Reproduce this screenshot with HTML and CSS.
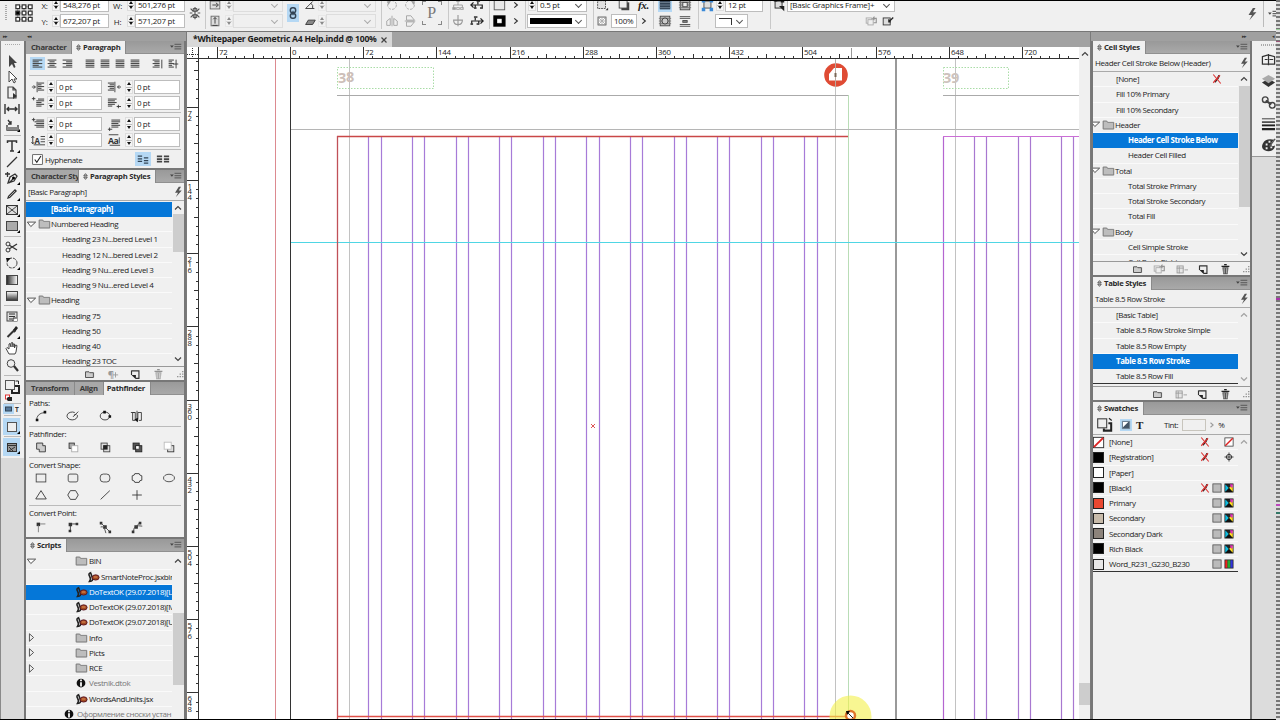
FILE: index.html
```html
<!DOCTYPE html>
<html lang="en">
<head>
<meta charset="utf-8">
<title>Whitepaper Geometric A4 Help.indd</title>
<link rel="stylesheet" href="styles.css">
</head>
<body>
<div class="app">
<header class="control">
  <div class="grp ga">
    <i class="tall grip-v"></i><i class="tall" data-i="refpoint" data-s="20"></i>
    <label>X:</label><b class="spin"></b><span class="field">548,276 pt</span><label>W:</label><b class="spin"></b><span class="field">501,276 pt</span><i class="tall" data-i="unlink"></i>
    <label>Y:</label><b class="spin"></b><span class="field">672,207 pt</span><label>H:</label><b class="spin"></b><span class="field">571,207 pt</span>
  </div>
  <div class="grp gb">
    <i data-i="scalex"></i><b class="spin dim"></b><span class="field off combo"></span><i class="tall chain" data-i="chain" data-s="12"></i><i data-i="angle"></i><b class="spin dim"></b><span class="field off combo"></span>
    <i data-i="scaley"></i><b class="spin dim"></b><span class="field off combo"></span><i data-i="shear"></i><b class="spin dim"></b><span class="field off combo"></span>
  </div>
  <div class="grp gc"><i data-i="rotl"></i><i data-i="rotr"></i><span class="tall bigp">P</span><i data-i="fliph"></i><i data-i="flipv"></i></div>
  <div class="grp gd"><i data-i="tree" class="dim"></i><i data-i="tree2"></i><i data-i="treed" class="dim"></i><i data-i="tree3"></i></div>
  <div class="grp ge"><i data-i="fillbox"></i><i data-i="chev"></i><i data-i="strokebox"></i><i data-i="chev"></i></div>
  <div class="grp gf"><b class="spin"></b><span class="field combo">0.5 pt</span><span class="field combo wide"><em></em></span></div>
  <div class="grp gg"><i data-i="dashbox"></i><i data-i="shadow"></i><i class="fx">fx.</i><i data-i="opac"></i><span class="field">100%</span><i data-i="chev"></i></div>
  <div class="grp gh"><i data-i="wrap1" class="lit"></i><i data-i="wrap2"></i><i data-i="wrap3"></i><i data-i="wrap4"></i></div>
  <div class="grp gi"><i data-i="corner"></i><b class="spin"></b><span class="field">12 pt</span><i></i><span class="field combo cornerbox"><u></u></span></div>
  <div class="grp gj"><i data-i="objstyle"></i><span class="field combo">[Basic Graphics Frame]+</span><i></i><div class="pair"><i data-i="clear" class="dim"></i><i data-i="newov"></i></div></div>
  <div class="endbar"><i data-i="bolt" data-s="14"></i><s></s><i data-i="menu" data-s="12"></i></div>
</header>

<main class="work">
  <div class="left">
    <div class="dockbar"><span>▸▸</span><span>◂◂</span></div>
    <div class="leftcols">
      <nav class="tools" id="tools"></nav>
      <div class="panels">
        <section class="p-para">
          <div class="tabs"><span class="tab off first">Character</span><span class="tab on"><i data-i="updown" data-s="7"></i>Paragraph</span><i data-i="menu" data-s="12"></i></div>
          <div class="aligns"><i class="lit" data-i="al"></i><i data-i="ac"></i><i data-i="ar"></i><i data-i="aj" class="gap"></i><i data-i="aj"></i><i data-i="aj"></i><i data-i="aj"></i><i data-i="as" class="gap"></i><i data-i="as2"></i></div>
          <div class="pgrid"><i data-i="ind1"></i><b class="spin"></b><span class="field">0 pt</span><i data-i="ind2"></i><b class="spin"></b><span class="field">0 pt</span><i data-i="ind3"></i><b class="spin"></b><span class="field">0 pt</span><i data-i="ind4"></i><b class="spin"></b><span class="field">0 pt</span></div>
          <div class="pgrid second"><i data-i="ind5"></i><b class="spin"></b><span class="field">0 pt</span><i data-i="ind6"></i><b class="spin"></b><span class="field">0 pt</span><i data-i="drop1"></i><b class="spin"></b><span class="field">0</span><i data-i="drop2"></i><b class="spin"></b><span class="field">0</span></div>
          <div class="hyph"><i data-i="check" data-s="11"></i><span>Hyphenate</span><i class="lit" data-i="grid1"></i><i data-i="grid2"></i></div>
        </section>
        <section class="p-styles">
          <div class="tabs"><span class="tab off cut">Character Sty</span><span class="tab on"><i data-i="updown" data-s="7"></i>Paragraph Styles</span><i data-i="menu" data-s="12"></i></div>
          <div class="current"><span>[Basic Paragraph]</span><i data-i="bolt" data-s="12"></i></div>
          <div class="scroller"><div class="list" id="pstyles"></div><div class="bar"><i data-i="up" data-s="8"></i><em></em><i data-i="down" data-s="8"></i></div></div>
          <div class="foot"><i data-i="folder2"></i><i data-i="pclear" class="dim"></i><i data-i="new"></i><i data-i="trash" class="dim"></i><i data-i="grab" data-s="10"></i></div>
        </section>
        <section class="p-path">
          <div class="tabs"><span class="tab off">Transform</span><span class="tab off">Align</span><span class="tab on">Pathfinder</span></div>
          <h4>Paths:</h4><div class="icons"><i data-i="pp1"></i><i data-i="pp2"></i><i data-i="pp3"></i><i data-i="pp4"></i></div>
          <h4 class="ln">Pathfinder:</h4><div class="icons"><i data-i="pf1"></i><i data-i="pf2"></i><i data-i="pf3"></i><i data-i="pf4"></i><i data-i="pf5"></i></div>
          <h4 class="ln">Convert Shape:</h4><div class="icons shapes"><i data-i="cs1"></i><i data-i="cs2"></i><i data-i="cs3"></i><i data-i="cs4"></i><i data-i="cs5"></i><i data-i="cs6"></i><i data-i="cs7"></i><i data-i="cs8"></i><i data-i="cs9"></i></div>
          <h4 class="ln">Convert Point:</h4><div class="icons"><i data-i="cp1"></i><i data-i="cp2"></i><i data-i="cp3"></i><i data-i="cp4"></i></div>
        </section>
        <section class="p-scripts">
          <div class="tabs"><span class="tab on"><i data-i="updown" data-s="7"></i>Scripts</span><i data-i="menu" data-s="12"></i></div>
          <div class="scroller"><div class="list" id="scripts"></div><div class="bar"><i data-i="up" data-s="8"></i><em></em></div></div>
        </section>
      </div>
    </div>
  </div>

  <div class="doc">
    <div class="doctabs"><div class="doctab"><span>*Whitepaper Geometric A4 Help.indd @ 100%</span><i data-i="close" data-s="8"></i></div></div>
    <div class="docbody">
      <div class="pageview">
        <svg id="hruler" width="892" height="12" viewBox="187 47 892 12"></svg>
        <div class="lower">
          <svg id="vruler" width="12" height="660" viewBox="187 59 12 660"></svg>
          <svg id="canvas" width="880" height="660" viewBox="199 59 880 660"></svg>
        </div>
      </div>
      <div class="bar docscroll"><i data-i="up" data-s="8"></i><em></em></div>
    </div>
  </div>

  <div class="right">
    <div class="dockbar"><span>▸▸</span><span>◂</span></div>
    <div class="rightcols">
      <div class="panels">
        <section class="p-cell">
          <div class="tabs"><span class="tab on"><i data-i="updown" data-s="7"></i>Cell Styles</span><i data-i="menu" data-s="12"></i></div>
          <div class="current"><span>Header Cell Stroke Below (Header)</span><i data-i="bolt" data-s="12"></i></div>
          <div class="scroller"><div class="list" id="cells"></div><div class="bar"><i data-i="up" data-s="8"></i><em></em><i data-i="down" data-s="8"></i></div></div>
          <div class="foot"><i data-i="folder2"></i><i data-i="clear" class="dim"></i><i data-i="tclear" class="dim"></i><i data-i="new"></i><i data-i="trash"></i><i data-i="grab" data-s="10"></i></div>
        </section>
        <section class="p-table">
          <div class="tabs"><span class="tab on"><i data-i="updown" data-s="7"></i>Table Styles</span><i data-i="menu" data-s="12"></i></div>
          <div class="current"><span>Table 8.5 Row Stroke</span><i data-i="bolt" data-s="12"></i></div>
          <div class="scroller"><div class="list" id="tables"></div><div class="bar"><i data-i="up" data-s="8" class="dim"></i><em></em><i data-i="down" data-s="8" class="dim"></i></div></div>
          <div class="foot"><i data-i="folder2"></i><i data-i="tclear" class="dim"></i><i data-i="new"></i><i data-i="trash"></i><i data-i="grab" data-s="10"></i></div>
        </section>
        <section class="p-swatch">
          <div class="tabs"><span class="tab on"><i data-i="updown" data-s="7"></i>Swatches</span><i data-i="menu" data-s="12"></i></div>
          <div class="swbar"><i data-i="fs" data-s="18"></i><i class="lit" data-i="cont" data-s="12"></i><b class="tt">T</b><span>Tint:</span><em></em><i data-i="chev" data-s="12" class="dim"></i><span>%</span></div>
          <div class="scroller"><div class="list" id="swatches"></div><div class="bar"><i data-i="up" data-s="8" class="dim"></i></div></div>
        </section>
      </div>
      <nav class="strip"><i class="grip-h"></i><i data-i="pages" data-s="15"></i><i data-i="layers" data-s="15"></i><i data-i="links" data-s="15"></i><i data-i="strokes" data-s="15"></i><i data-i="palette" data-s="15"></i></nav>
    </div>
  </div>
</main>
<div class="edge"></div>
</div>
<script src="app.js"></script>
</body>
</html>
```

FILE: styles.css
```css
* { box-sizing: border-box; }
body { margin: 0; background: #000; }
.app {
  position: relative; width: 1280px; height: 720px; padding: 1px 0; overflow: hidden;
  display: flex; flex-direction: column;
  font: 8px/15px "Open Sans", "Noto Sans", sans-serif; letter-spacing: -.39px; color: #1c1c1c; background: #000;
}
i, em { font-style: normal; display: block; }
i svg { display: block; }
.dim { opacity: .45; }
.lit { background: #b5d8f4; }

/* control bar */
.control { height: 30px; background: #f0f0f0; display: flex; overflow: hidden; flex: none; letter-spacing: -.25px; }
.grp { display: grid; grid-template-rows: 16px 16px; margin-top: -4px; height: 34px; flex: none; align-items: center; justify-items: center; border-left: 1px solid transparent; background: linear-gradient(#c9c9c9, #c9c9c9) 0 4px / 1px 28px no-repeat; }
.tall { grid-row: span 2; }
.ga { width: 204px; grid-template-columns: 9px 28px 13px 9px 49px 17px 9px 50px 19px; background: none; }
.gb { width: 176px; grid-template-columns: 19px 9px 50px 19px 15px 9px 50px; }
.gc { width: 67px; padding-left: 2px; grid-template-columns: 18px 18px 25px; }
.gc > i { opacity: .5; }
.gd { width: 41px; grid-template-columns: 19px 20px; }
.ge { width: 36px; grid-template-columns: 20px 14px; }
.gf { width: 68px; padding-left: 2px; grid-template-columns: 10px 50px; }
.gg { width: 60px; grid-template-columns: 18px 26px 13px; }
.gh { width: 45px; padding-left: 2px; grid-template-columns: 20px 19px; }
.gi { width: 72px; grid-template-columns: 17px 10px 38px; }
.gj { width: 129px; grid-template-columns: 17px 108px; }
.pair { display: flex; gap: 3px; justify-self: end; }
.grip-v { width: 2px; height: 16px; background: repeating-linear-gradient(#aaa 0 1px, transparent 1px 2px); }
.spin { width: 8px; height: 12px; border: 1px solid #ddd; background: linear-gradient(#bbb, #bbb) center / 6px 1px no-repeat, #f5f5f5; display: flex; flex-direction: column; align-items: center; justify-content: space-between; padding: 1px 0; }
.spin::before, .spin::after { content: ""; border: 2px solid transparent; }
.spin::before { border-bottom: 3px solid #111; border-top: 0; }
.spin::after { border-top: 3px solid #111; border-bottom: 0; }
.field { width: 100%; height: 14px; border: 1px solid #bdbdbd; background: #fff; padding-left: 2px; line-height: 12px; white-space: nowrap; position: relative; }
.field.off { background: #f0f0f0; border-color: #ddd; }
.combo::after { content: ""; position: absolute; right: 5px; top: 3px; width: 4px; height: 4px; border: solid #555; border-width: 0 1px 1px 0; transform: rotate(45deg); }
.combo.off::after { border-color: #aaa; }
.wide { grid-column: span 2; padding: 3px 2px; }
.wide em { width: 42px; height: 6px; background: #000; }
.cornerbox { grid-column: 2 / 4; justify-self: start; width: 33px; padding: 3px 3px; }
.cornerbox u { display: block; width: 13px; height: 7px; border: solid #333; border-width: 1px 1px 0 0; }
.bigp { font: 16px/24px "Liberation Serif", serif; color: #777; width: 20px; height: 24px; text-align: center; background: linear-gradient(#888,#888) 0 0/4px 1px no-repeat, linear-gradient(#888,#888) 0 0/1px 4px no-repeat, linear-gradient(#888,#888) 100% 0/4px 1px no-repeat, linear-gradient(#888,#888) 100% 0/1px 4px no-repeat, linear-gradient(#888,#888) 0 100%/4px 1px no-repeat, linear-gradient(#888,#888) 0 100%/1px 4px no-repeat, linear-gradient(#888,#888) 100% 100%/4px 1px no-repeat, linear-gradient(#888,#888) 100% 100%/1px 4px no-repeat; }
.fx { font: italic bold 11px/14px "Liberation Serif", serif; }
.chain { background: #b5d8f4; padding: 3px 0; height: 18px; }
.endbar { margin-left: auto; width: 35px; display: flex; align-items: center; gap: 4px; padding-bottom: 4px; overflow: hidden; }
.endbar i { flex: none; }
.endbar s { width: 1px; height: 26px; background: #bbb; flex: none; }

/* work area */
.work { display: flex; flex: 1; min-height: 0; background: #7b7b7b; }
.left { width: 186px; flex: none; display: flex; flex-direction: column; }
.right { width: 189px; flex: none; display: flex; flex-direction: column; }
.dockbar { height: 10px; flex: none; border-top: 1px solid #777; background: #a0a0a0; font: 5px/9px "DejaVu Sans", sans-serif; color: #333; display: flex; letter-spacing: -.5px; }
.left .dockbar { padding-left: 3px; gap: 20px; }
.right .dockbar { padding-left: 151px; gap: 26px; }
.leftcols, .rightcols { display: flex; flex: 1; min-height: 0; }
.tools { width: 24px; background: #dadada; border-left: 1px solid #8a8a8a; flex: none; }
.toolbox { background: #f0f0f0; height: 417px; }
.toolbox svg { display: block; }
.panels { width: 162px; padding: 0 2px; background: #777; flex: none; display: flex; flex-direction: column; }
.right .panels { width: 161px; }
section { background: #f0f0f0; flex: none; overflow: hidden; display: flex; flex-direction: column; }
.p-para { height: 127px; margin-bottom: 2px; }
.p-styles { height: 210px; margin-bottom: 2px; }
.p-path { height: 155px; margin-bottom: 2px; }
.p-scripts { flex: 1; }
.tabs { height: 13px; flex: none; display: flex; background: linear-gradient(#999, #a9a9a9); font-weight: 700; font-size: 7.7px; line-height: 13px; letter-spacing: -.28px; border-bottom: 1px solid #909090; }
.tab { padding: 0 5px; white-space: nowrap; display: flex; color: #2a2a2a; border-right: 1px solid #8a8a8a; height: 13px; }
.tab.on { background: #f0f0f0; padding: 0 5px 0 3px; }
.tab.off { color: #383838; background: #a8a8a8; }
.tab.first { width: 46px; }
.tab i { margin: 3px 1px 0 0; }
.tab.cut { width: 53px; overflow: hidden; padding-right: 0; }
.tabs > i { margin-left: auto; margin-right: 2px; }
.current { height: 18px; flex: none; display: flex; justify-content: space-between; align-items: center; padding: 0 0 0 2px; border-bottom: 1px solid #aaa; white-space: nowrap; }
.scroller { display: flex; flex: 1; min-height: 0; overflow: hidden; }
.list { flex: 1; min-width: 0; overflow: hidden; }
.row { height: 15.25px; display: flex; align-items: center; white-space: nowrap; border-bottom: 1px solid #fafafa; overflow: hidden; line-height: 14px; }
.row i { flex: none; }
.row.sel { background: #0577d8; color: #fff; border-color: #0577d8; }
.row.bold { font-weight: 700; font-size: 7.9px; letter-spacing: -.4px; }
.row.grey { color: #777; }
.row .sp { flex: 1; }
.l0 { padding-left: 23px; }
.left .l0 { padding-left: 25px; }
.l1 { padding-left: 36px; }
.right .l1 { padding-left: 35px; }
.right .lf i:first-child { margin-left: -3px; }
.s0 { padding-left: 36px; }
.s1 { padding-left: 48px; }
.s2 { padding-left: 60px; }
.s0 i, .s1 i, .s2 i, .ind + i { margin-right: 1px; }
.ind { width: 37px; flex: none; }
.tail { width: 15px; }
#swatches .row { padding: 0 3px 0 0; }
.hole { width: 12px; }
.nochip { margin: 0 3px 0 -2px; }
.bar { width: 12px; flex: none; background: #f0f0f0; display: flex; flex-direction: column; align-items: center; padding: 3px 0; }
.bar em { width: 11px; background: #cdcdcd; }
.bar i:last-child { margin-top: auto; }
.p-styles .bar em { height: 38px; margin-top: 2px; }
.p-scripts .bar em { height: 72px; margin-top: 48px; }
.p-scripts .bar { padding-top: 5px; }
.p-scripts .list { padding-top: 2.3px; }
.p-styles .list { padding-top: .8px; }
.p-cell .bar em { height: 121px; margin-top: 3px; }
.bar i:first-child { margin-top: 0; }
.foot { height: 14px; flex: none; border-top: 1px solid #999; display: flex; justify-content: flex-end; align-items: center; gap: 8px; }
.p-styles .foot { gap: 9px; }
.p-table .foot { gap: 8.5px; }
.p-para .aligns { display: flex; height: 22px; margin: 0 3px; border-bottom: 1px solid #bbb; align-items: center; padding: 0 0 2px 1px; }
.aligns i { width: 15.2px; }
.aligns .lit { height: 13px; display: flex; align-items: center; }
.aligns .gap { margin-left: 7px; }
.pgrid { display: grid; grid-template-columns: 17px 10px 46px 22px 10px 46px; grid-template-rows: 16px 16px; margin: 0 3px; padding-top: 3px; height: 37px; align-items: center; border-bottom: 1px solid #bbb; justify-items: center; }
.pgrid .field, .pgrid .spin { height: 14px; }
.pgrid i:nth-child(6n+4) { justify-self: end; margin-right: 3px; }
.hyph { display: flex; align-items: center; padding: 1px 11px 0 5px; height: 17px; }
.hyph span { flex: 1; margin-left: -1px; }
.hyph i { padding: 0 1px; margin-right: 2px; }
.hyph i:nth-child(3) { margin-right: 4px; }
.p-path h4 { margin: 0 3px; font: inherit; height: 12.5px; line-height: 16px; }
.p-path h4.ln { border-top: 1px solid #bbb; margin-top: 1px; height: 13px; line-height: 14px; }
.icons { display: grid; grid-template-columns: repeat(5, 32px); justify-items: center; height: 17px; padding-right: 2px; align-items: center; margin-left: -1px; }
.icons.shapes { height: 34.5px; }
.swbar { height: 20px; flex: none; border-bottom: 1px solid #aaa; display: flex; align-items: center; padding-left: 3px; white-space: nowrap; }
.swbar > i:nth-child(2) { margin-left: 6px; }
.tt { font: bold 11px/14px "Liberation Serif", serif; margin: 0 21px 0 4px; }
.swbar em { width: 24px; height: 12px; border: 1px solid #c8c5bd; margin: 0 0 0 4px; }
.chip { width: 11px; height: 11px; border: 1px solid #222; margin: 0 5px 0 0; flex: none; }
#tables .row:last-child, #swatches .row:last-child { border-bottom: 1.5px solid #333; }
.p-cell { height: 234px; margin-bottom: 2px; }
.p-table { height: 123px; margin-bottom: 2px; }
.p-swatch { flex: 1; }
.strip { width: 28px; background: linear-gradient(#f0f0f0 115px, #999 115px 116px, #dcdcdc 116px); display: flex; flex-direction: column; align-items: center; gap: 6.2px; padding: 3px 0 0 4px; }
.grip-h { width: 15px; height: 2px; background: repeating-linear-gradient(90deg, #aaa 0 1px, transparent 1px 2px); flex: none; }
.edge { position: absolute; right: 0; top: 0; width: 4px; height: 720px; background: linear-gradient(transparent 29px, #9c9 29px 30px, transparent 30px 41px, #957 41px 42px, transparent 42px 298px, #a3a 298px 300px, transparent 300px 504px, #b4b 504px 506px, transparent 506px 512px, #376 512px 514px, transparent 514px), repeating-linear-gradient(#777 0 2px, #ddd 2px 4px); }

/* document */
.doc { flex: 1; min-width: 0; display: flex; flex-direction: column; padding: 0 1px; }
.doctabs { height: 16px; flex: none; background: #a2a2a2; border-top: 1px solid #777; }
.doctab { width: 205px; height: 15px; background: #d8d8d8; display: flex; align-items: center; justify-content: space-between; padding: 0 4px 0 6px; font-weight: 700; font-size: 8.6px; letter-spacing: -.24px; white-space: nowrap; }
.docbody { display: flex; flex: 1; min-height: 0; }
.pageview { width: 892px; background: #fff; }
.pageview svg { display: block; }
.lower { display: flex; }
.docscroll { flex: 1; width: auto; }
.docscroll em { margin-top: 625px; height: 22px; }
svg text { font-family: "Open Sans", "Noto Sans", sans-serif; }
```

FILE: app.js
```js
const para = (a) => a.map((r, i) => `<path d="M${r[0]} ${3.5 + i * 2}H${r[1]}" stroke="#444" stroke-width="1.2"/>`).join('');
const box = (x, y, w, h, f, s) => `<rect x="${x}" y="${y}" width="${w}" height="${h}" fill="${f || 'none'}" stroke="${s || '#444'}"/>`;
const ln = (d, s, w) => `<path d="${d}" fill="none" stroke="${s || '#333'}" stroke-width="${w || 1}"/>`;
const fl = (d, f) => `<path d="${d}" fill="${f || '#333'}"/>`;
const tx = (x, y, t, s) => `<text x="${x}" y="${y}" font-size="${s}" font-weight="700" fill="#333" letter-spacing="-.4">${t}</text>`;

const icons = {
  refpoint: ln('M3 3h10v10H3zM3 8h10M8 3v10', '#999', .8) + [1, 6, 11].map(y => [1, 6, 11].map(x => box(x + .5, y + .5, 3, 3, x === 1 && y === 6 ? '#000' : '#fff', '#333')).join('')).join(''),
  unlink: ln('M8 1v14M3 3l3 3M13 3l-3 3M2 8h3M14 8h-3M3 13l3-3M13 13l-3-3', '#555', 1.3) + box(6, 3, 4, 3) + box(6, 10, 4, 3),
  scalex: box(2.5, 3.5, 11, 9, '#ddd', '#666') + ln('M5 8h6M9 5.5l3 2.5-3 2.5'),
  scaley: box(3.5, 2.5, 9, 11, '#ddd', '#666') + ln('M8 4v7M6 6l2-2 2 2M5 13h6'),
  chain: ln('M8 5v6', '#234', 1.5) + '<rect x="4.500" y="1" width="7" height="6.500" rx="3" fill="none" stroke="#345" stroke-width="2"/><rect x="4.500" y="8.500" width="7" height="6.500" rx="3" fill="none" stroke="#345" stroke-width="2"/>',
  angle: ln('M3 12h10M3 12L11 4M9 6q3 2 2 6'),
  shear: fl('M3 12l3-5h8l-3 5z', '#888') + ln('M3 12l3-5h8l-3 5z'),
  rotl: '<circle cx="8" cy="8" r="5" fill="none" stroke="#555" stroke-dasharray="3 1.500"/>' + fl('M2 4l5-1-3 5z', '#555'),
  rotr: '<circle cx="8" cy="8" r="5" fill="none" stroke="#555" stroke-dasharray="3 1.500"/>' + fl('M14 4l-5-1 3 5z', '#555'),
  fliph: ln('M8 2v12M6 13H2V8l4-3zM10 13h4V8l-4-3z', '#555'),
  flipv: ln('M2 8h12M4 7V2h5l4 5zM4 9v5h5l4-5z', '#555'),
  tree: ln('M8 3v5M3 12V8h10v4') + box(6.5, 2, 3, 2) + box(2, 11, 3, 2, '#333') + box(6.5, 11, 3, 2) + box(11, 11, 3, 2),
  tree2: ln('M1 8h5M4 5L1 8l3 3M9 4v3M6 12V8h8v4', '#222', 1.4) + box(8, 3, 3, 1) + box(5, 11, 2, 1) + box(12, 11, 2, 1),
  treed: ln('M8 1v13M3 7q0 5 5 5t5-5z', '#333', 1.3),
  tree3: ln('M15 8h-5M12 5l3 3-3 3M6 4v3M2 12V8h8v4', '#222', 1.4) + box(5, 3, 3, 1) + box(1, 11, 2, 1) + box(8, 11, 2, 1),
  fillbox: box(2.5, 2.5, 12, 11, '#e8e8e8', '#555'),
  strokebox: '<rect x="1.500" y="1.500" width="14" height="13"/>' + box(6.5, 6, 4, 4, '#fff', '#fff'),
  chev: ln('M6 5l3.500 3L6 11', '#333', 1.4),
  dashbox: '<rect x="3" y="3" width="9" height="9" fill="#e0e0e0" stroke="#444" stroke-dasharray="2 1"/>' + fl('M12 14h3v-3z'),
  shadow: '<path d="M5 5h9v9H5z" fill="#444"/>' + box(2.5, 2.5, 9, 9, '#eee'),
  opac: box(3.5, 3.5, 9, 9, '#fff') + ln('M4 4l8 8M12 4l-8 8M8 3v10M3 8h10', '#aaa'),
  wrap1: fl('M2 3h12v10H2z', '#345') + ln('M2 5h12M2 8h12M2 11h12', '#789'),
  wrap2: box(2.5, 2.5, 11, 11, '#bbb') + ln('M1 5h14M1 8h14M1 11h14', '#777') + box(5.5, 5, 5, 5, '#eee'),
  wrap3: box(2.5, 2.5, 11, 11, '#bbb') + ln('M1 5h14M1 8h14M1 11h14', '#777') + '<circle cx="8" cy="8" r="3.500" fill="#ccc" stroke="#333"/>',
  wrap4: ln('M2 3h12M2 5h12M2 12h12M2 14h12', '#444') + box(5.5, 7.5, 5, 2, '#888'),
  corner: box(4.5, 3.5, 8, 8, '#ddd') + fl('M2 1h4v4H2zM11 1h4v4h-4zM2 11h4v4H2zM11 11h4v4h-4z', '#3b8ad8'),
  objstyle: box(3.5, 3.5, 8, 8, '#ddd', '#222') + fl('M2 2h4v2H2zM10 2h4v3h-4zM8 9l6 6V9z', '#222'),
  clear: box(2.5, 4.5, 6, 6, '#eee', '#555') + box(4.5, 6.5, 6, 6, '#eee', '#555') + ln('M10 5h4v5h-3M12 3l-2 2 2 2', '#222', 1.3),
  newov: box(2.5, 4.5, 8, 8, '#ddd', '#333') + ln('M9 9l5-5M11 9H9V6', '#222', 1.5),
  bolt: fl('M9 1L4 9h4l-3 6 8-9H9l3-5z', '#555'),
  menu: fl('M0 6h5L2.500 9z', '#444') + ln('M6 4.500h9M6 7.500h9M6 10.500h9', '#666', 1.4),
  updown: ln('M4 6.500l4-5 4 5zM4 9.500l4 5 4-5z', '#333', 1.8),
  close: ln('M3 3l10 10M13 3L3 13', '#444', 2.4),
  up: ln('M2 11l6-6 6 6', '#444', 2.4), down: ln('M2 5l6 6 6-6', '#444', 2.4),
  al: para([[3, 14], [3, 10], [3, 14], [3, 10], [3, 14]]), ac: para([[3, 13], [5, 11], [3, 13], [5, 11], [3, 13]]),
  ar: para([[3, 14], [7, 14], [3, 14], [7, 14], [3, 14]]), aj: para([[3, 13], [3, 13], [3, 13], [3, 13], [3, 13]]),
  as: para([[3, 11], [5, 11], [3, 11], [5, 11], [3, 11]]) + ln('M13.500 3v10'), as2: para([[3, 9], [3, 7], [3, 9], [3, 7], [3, 9]]) + ln('M11.500 3v10M8 8h6'),
  ind1: ln('M1 8h4M3 6l2 2-2 2M7 2v12') + para([[8, 15], [8, 12], [8, 15], [8, 12], [8, 15]]),
  ind2: ln('M9 2v12M16 8h-4M14 6l-2 2 2 2') + para([[1, 8], [3, 8], [1, 8], [3, 8], [1, 8]]),
  ind3: ln('M1 3h4M3 1v4') + para([[8, 15], [6, 15], [6, 12], [6, 15], [6, 12]]),
  ind4: para([[1, 11], [1, 9], [1, 11], [1, 9], [1, 6]]) + ln('M11 12h5M13 10v4'),
  ind5: ln('M1 3h4M3 1v4') + para([[6, 15], [4, 15], [6, 15], [4, 15], [6, 15]]),
  ind6: para([[5, 15], [5, 15], [5, 13], [5, 15], [5, 13]]) + ln('M1 14h5M3 12v4'),
  drop1: ln('M2 4v8M.5 5.500L2 3.500l1.500 2M.5 10.500L2 12.500l1.500-2') + tx(4, 12, 'A', 9) + ln('M11 4h5M11 7h5M11 10h5M3 13.500h13', '#333'),
  drop2: tx(1, 12, 'Aa', 10) + ln('M2 2h11M3 14h12M14 5v7'),
  check: box(1, 1, 14, 14, '#fff', '#333') + ln('M4 8l3 4 6-9', '#222', 1.6),
  grid1: fl('M2 4h5v1.500H2zM2 7h5v1.500H2zM2 10h5v1.500H2zM9 6h5v1.500H9zM9 9h5v1.500H9zM9 12h5v1.500H9z', '#345'),
  grid2: fl('M1 4h6v2H1zM1 7h6v2H1zM1 10h6v2H1zM9 4h6v2H9zM9 7h6v2H9zM9 10h6v2H9z', '#444'),
  folder: fl('M2 3h5l1 2h7v8H2z', '#bdbdbd') + ln('M2.500 12.500v-9h4l1 1.500h7v7.500z', '#777'),
  folder2: fl('M4 5h4l1 1h5v6H4z', '#ccc') + ln('M4 5.500h4l1 1h4v5.500H4z', '#444'),
  pclear: tx(3, 12, '¶', 11) + ln('M9 9h6M12 6v6'),
  tclear: box(3.5, 4.5, 7, 8, '#ddd', '#333') + ln('M3 7h8M6 5v8M12 9h4'),
  new: fl('M4 4h8v9H4z', '#eee') + ln('M4 4.500h8.500v8.500H9M4 4v5', '#333', 1.3) + fl('M4 9h5v5z', '#222'),
  trash: ln('M4 5h9M7 3h3', '#222', 1.4) + fl('M5 6h7l-1 8H6z', '#555') + ln('M7 7v6M10 7v6', '#ccc'),
  grab: fl('M13 3h2v2h-2zM9 7h2v2H9zM13 7h2v2h-2zM5 11h2v2H5zM9 11h2v2H9zM13 11h2v2h-2z', '#888'),
  open: fl('M3 4.500h10L6.500 11z', '#fff') + ln('M2 4.500h12L7 11z', '#444', 1.3), shut: ln('M5 2.500l6 5.500-6 5.500z', '#444', 1.3),
  jsx: ln('M6 3q-4 1-2 4t0 6q5 0 3-5t-1-5', '#222', 1.8) + '<ellipse cx="11" cy="8.500" rx="4" ry="3" fill="#a04a20" stroke="#512"/>' + ln('M9 8h4', '#e96'),
  info: '<circle cx="8" cy="8" r="5" fill="#111"/>' + fl('M7 4h2v2H7zM7 7h2v5H7z', '#fff'),
  noedit: ln('M11 3q-1 4-6 9', '#222', 2.4) + ln('M3 2l10 12M12 3L3 13', '#d33', 1.5),
  none: box(2.5, 2.5, 11, 11, '#fff', '#333') + ln('M3 13L13 3', '#d22', 2),
  reg: '<circle cx="8" cy="8" r="3.500" fill="none" stroke="#333" stroke-width="1.300"/>' + ln('M8 2v12M2 8h12', '#333', 1.2),
  gray: box(2.5, 2.5, 11, 11, '#bbb', '#444'),
  cmyk: fl('M2 2h12v12H2z', '#111') + fl('M3 3l5 5-5 5z', '#1bd') + fl('M4 3h8L8 8z', '#222') + fl('M13 3L8 8l5 5z', '#fd2') + fl('M9 3h4v3l-2 2z', '#d3b') + fl('M4 13l4-5 4 5z', '#111'),
  rgb: fl('M2 2h12v12H2z', '#222') + fl('M3 3h3v10H3z', '#e22') + fl('M6 3h4v10H6z', '#2a3') + fl('M10 3h3v10h-3z', '#33d'),
  fs: box(1.5, 2.5, 8, 8, '#ededed', '#444') + ln('M11 6.500h2.500v6.500H7V11', '#222', 1.8) + ln('M11.500 2l2.500 2', '#222'),
  cont: box(3, 3, 10, 10, '#456', '#789') + fl('M4 4h7l-7 7z', '#fff'),
  pp1: ln('M3 13q0-8 9-9', '#444') + fl('M2 11h3v3H2zM11 2h3v3h-3z', '#111'),
  pp2: ln('M10 4a6 4.500 0 1 0 3 3', '#333') + ln('M8 9l6-6M9 7l3-1', '#333'),
  pp3: '<ellipse cx="8" cy="8" rx="5.500" ry="4.500" fill="none" stroke="#333"/>' + fl('M6 2h3v3H6zM12 7h3v3h-3z', '#111'),
  pp4: ln('M3 4v9h3V4zM9 12V4h4v9h-3M1 4h5M8 2v12') + fl('M9 10l-4 2 4 3z', '#111'),
  pf1: fl('M3 3h7v3h3v7H6v-3H3z', '#ccc') + ln('M3 3.500h7v3h3v7H6v-3H3z'),
  pf2: box(3.5, 3.5, 6, 6, '#aaa', '#333') + box(6.5, 6.5, 7, 7, '#fff', '#aaa'),
  pf3: box(3.5, 3.5, 7, 7, '#ddd') + box(6.5, 6.5, 7, 7, '#ddd') + fl('M6 6h5v5H6z', '#222'),
  pf4: box(3.5, 3.5, 7, 7, '#555', '#222') + box(6.5, 6.5, 7, 7, '#555', '#222') + fl('M7 7h3v3H7z', '#fff'),
  pf5: box(6.5, 6.5, 7, 7, '#ddd', '#333') + box(2.5, 2.5, 8, 8, '#fff', '#bbb'),
  cs1: box(2.5, 3.5, 11, 9, '#eee'), cs2: '<rect x="2.500" y="3.500" width="11" height="9" rx="2" fill="#eee" stroke="#444"/>',
  cs3: '<rect x="2.500" y="3.500" width="11" height="9" rx="3.500" fill="#eee" stroke="#444"/>',
  cs4: ln('M5.500 3h5q0 2 3 2.500v5q-3 0-3 2.500h-5q0-2-3-2.500v-5q3-.5 3-2.500z', '#333'),
  cs5: '<ellipse cx="8" cy="8" rx="6.300" ry="4.300" fill="#eee" stroke="#444"/>',
  cs6: ln('M8 3l6 9.500H2z'), cs7: ln('M5 3h6l3 5-3 5H5L2 8z'), cs8: ln('M3 13L13.500 3'), cs9: ln('M8 2.500v11M2.500 8h11'),
  cp1: fl('M3 3h4v4H3z', '#333') + ln('M5 6v8M7 4.500h6', '#777'), cp2: fl('M3 3h4v4H3zM3 11h3v3H3zM11 3h3v3h-3z', '#333') + ln('M5 6v6M7 4.500h5', '#333'),
  cp3: fl('M2 2h3v3H2zM6 6h4v4H6zM12 12h3v3h-3z', '#333') + ln('M3 8q4-2 6 7M3 3l10 10', '#444'), cp4: fl('M10 2h3v3h-3zM5 6h4v4H5zM2 12h3v3H2z', '#333') + ln('M4 13q0-8 10-6M11 3l-4 5', '#444'),
  pages: ln('M8 2v12M1.500 5l6-2 7 2v8h-13zM4 8h3M9 8h4', '#333', 1.3), layers: fl('M8 6l7 4-7 5-7-5z', '#333') + fl('M8 2l7 4-7 5-7-5z', '#aaa'),
  links: '<circle cx="4.500" cy="5" r="3" fill="none" stroke="#444" stroke-width="1.500"/><circle cx="12" cy="11" r="3" fill="none" stroke="#444" stroke-width="1.500"/>' + ln('M5 6l6 4', '#444', 2.4),
  strokes: ln('M1 3h14') + ln('M1 6.500h14', '#333', 1.6) + ln('M1 10h14', '#222', 2) + ln('M1 14h14', '#222', 2.4),
  palette: fl('M14 3Q5 1 2 7t4 8q8 1 9-6-4 2-4-1t3-5z', '#333') + fl('M5 7h2v2H5zM8 4h2v2H8zM5 11h2v2H5zM10 10h2v2h-2z', '#eee') + ln('M9 10l6-8', '#555', 1.5)
};

const svg = (n, s) => `<svg width="${s}" height="${s}" viewBox="0 0 16 16">${icons[n]}</svg>`;
const ic = (n, s = 14) => `<i>${svg(n, s)}</i>`;
document.querySelectorAll('i[data-i]').forEach(e => { e.innerHTML = svg(e.dataset.i, e.dataset.s || 14); });

/* tree lists */
const fill = (id, rows) => { document.getElementById(id).innerHTML = rows.map(([cls, html]) => `<div class="row ${cls}">${html}</div>`).join(''); };
const folder = t => ['lf', ic('open', 11) + ic('folder') + t];
fill('pstyles', [['l0 sel bold', '[Basic Paragraph]'], folder('Numbered Heading'), ['l1', 'Heading 23 N...bered Level 1'], ['l1', 'Heading 12 N...bered Level 2'], ['l1', 'Heading 9 Nu...ered Level 3'], ['l1', 'Heading 9 Nu...ered Level 4'], folder('Heading'), ['l1', 'Heading 75'], ['l1', 'Heading 50'], ['l1', 'Heading 40'], ['l1', 'Heading 23 TOC']]);
fill('cells', [['l0', '[None]<span class="sp"></span>' + ic('noedit', 12) + '<span class="tail"></span>'], ['l0', 'Fill 10% Primary'], ['l0', 'Fill 10% Secondary'], folder('Header'), ['l1 sel bold', 'Header Cell Stroke Below'], ['l1', 'Header Cell Filled'], folder('Total'), ['l1', 'Total Stroke Primary'], ['l1', 'Total Stroke Secondary'], ['l1', 'Total Fill'], folder('Body'), ['l1', 'Cell Simple Stroke'], ['l1', 'Cell Body Right']]);
fill('tables', [['l0', '[Basic Table]'], ['l0', 'Table 8.5 Row Stroke Simple'], ['l0', 'Table 8.5 Row Empty'], ['l0 sel bold', 'Table 8.5 Row Stroke'], ['l0', 'Table 8.5 Row Fill']]);
const sdir = (a, t) => ['', ic(a, 11) + '<span class="ind"></span>' + ic('folder') + t];
fill('scripts', [sdir('open', 'BIN'), ['s2', ic('jsx') + 'SmartNoteProc.jsxbin'], ['s1 sel', ic('jsx') + 'DoTextOK (29.07.2018)[L'], ['s1', ic('jsx') + 'DoTextOK (29.07.2018)[M'], ['s1', ic('jsx') + 'DoTextOK (29.07.2018)[U'], sdir('shut', 'Info'), sdir('shut', 'Picts'), sdir('shut', 'RCE'), ['s1 grey', ic('info') + 'Vestnik.dtok'], ['s1', ic('jsx') + 'WordsAndUnits.jsx'], ['s0 grey', ic('info') + 'Оформление сноски устан']]);
const sw = (c, n, ...k) => ['', (c === 'none' ? `<i class="nochip">${svg('none', 15)}</i>` : `<span class="chip" style="background:${c}"></span>`) + n + '<span class="sp"></span>' + k.map(x => x ? ic(x, 12) : '<span class="hole"></span>').join('')];
fill('swatches', [sw('none', '[None]', 'noedit', '', 'none'), sw('#000', '[Registration]', 'noedit', '', 'reg'), sw('#fff', '[Paper]'), sw('#000', '[Black]', 'noedit', 'gray', 'cmyk'), sw('#e9472f', 'Primary', 'gray', 'cmyk'), sw('#c8bbaa', 'Secondary', 'gray', 'cmyk'), sw('#8c837b', 'Secondary Dark', 'gray', 'cmyk'), sw('#000', 'Rich Black', 'gray', 'cmyk'), sw('#e7e6e6', 'Word_R231_G230_B230', 'gray', 'rgb')]);

/* toolbox: every glyph is drawn around the column centre x=11 */
const at = (x, y, g) => `<g transform="translate(${x} ${y})">${g}</g>`;
const T = [];
const tool = (y, g, fly) => T.push(at(3, y - 49, g) + (fly ? fl(`M16 ${y - 34}h3v-3z`, '#000') : ''));
const rule = y => T.push(ln(`M3 ${y - 41}.500h17`, '#bbb'));
T.push('<path d="M4 3.500h15" stroke="#aaa" stroke-dasharray="1 1"/>');
tool(61, fl('M5 2v12l3-3 2 4 1.500-1L10 10h3z', '#444'));
tool(77, '<path d="M5 2v11l3-3 2 4 1.500-1-1.500-3h3z" fill="#fff" stroke="#444"/>');
tool(93, ln('M4 2h5l3 3v8H4zM9 2v3h3', '#444', 1.2) + fl('M9 8v6l4-3z'));
tool(109, ln('M1 3v10M15 3v10M3 8h10M5 6L3 8l2 2M11 6l2 2-2 2', '#333', 1.4));
tool(125, ln('M3 8v5h11V8M5 13v-2M8 13v-2M11 13v-2M4 3l3 4M7 4v3H4', '#333', 1.3) + fl('M3 10h11v3H3z', '#888'), 1);
rule(135);
tool(146, ln('M3.500 5V3h9v2M8 3v10M6 13h4', '#333', 1.5), 1);
tool(162, ln('M3 13L13 3', '#333', 1.3));
tool(178, ln('M1 4h5M3.500 2v5M4 13l2-6 5-3 2 2-3 5zM5 13l4-4', '#333', 1.3) + '<circle cx="9.500" cy="8" r="1.500"/>', 1);
tool(194, fl('M3 13l1-3 7-7 2 2-7 7z', '#333') + ln('M5 11l6-6', '#aaa'), 1);
tool(210, box(2.5, 3.5, 11, 9, '#ddd', '#333') + ln('M3 4l10 8M13 4L3 12', '#444'), 1);
tool(226, box(2.5, 3.5, 11, 9, '#aaa', '#444'), 1);
rule(236);
tool(247, ln('M5 6l8 5M5 10l8-5', '#333', 1.4) + '<circle cx="4" cy="5" r="2" fill="none" stroke="#333"/><circle cx="4" cy="11" r="2" fill="none" stroke="#333"/>');
tool(263, '<circle cx="8" cy="8" r="5" fill="none" stroke="#444" stroke-dasharray="3 1"/>' + fl('M2 3l5 0-4 4z', '#111'), 1);
tool(280, '<defs><linearGradient id="gh"><stop stop-color="#222"/><stop offset="1" stop-color="#fff"/></linearGradient><linearGradient id="gv" x2="0" y2="1"><stop stop-color="#fff"/><stop offset="1" stop-color="#333"/></linearGradient></defs>' + box(2.5, 3.5, 11, 9, 'url(#gh)'));
tool(296, box(2.5, 3.5, 11, 9, 'url(#gv)'));
rule(305);
tool(317, box(3, 3, 10, 9, '#ddd') + ln('M5 5h6M5 7.500h6M5 10h3') + fl('M9 12l4-4v4z', '#fff') + ln('M9 12V9h4'));
tool(332, fl('M9 6l3-4 2 2-3 4z', '#222') + ln('M9 6l2 2M9.500 7l-6 6', '#333', 2), 1);
tool(348, '<path d="M5 14L2 8.500l1-1L5 9V4l1-.5L7 7V3l1.500-.5L9 7V4l1.500 0V8l1-3 1.500.5L12 12l-1 2z" fill="#fff" stroke="#444"/>');
tool(365, '<circle cx="7" cy="6.500" r="3.800" fill="#eee" stroke="#444"/>' + ln('M10 9l4 5', '#333', 2.2));
rule(375);
T.push(ln('M11 345h7v7h-7z', '#222', 2) + box(4.5, 339.500, 9, 9, '#eee', '#555') + ln('M14.500 340h3v3', '#222'));
T.push(box(4.500, 354, 4, 4, '#fff', '#d33') + fl('M7 356h4v4H7z', '#222') + box(6.500, 357, 2, 2, '#fff', '#222'));
rule(403);
T.push(fl('M2 363h11v10H2z', '#b5d8f4') + box(4.5, 366, 6, 4, '#579', '#345') + tx(14, 371, 'T', 6.500));
rule(415);
T.push(fl('M2 377h17v17H2z', '#b5d8f4') + box(6.500, 381.500, 9, 9, '#eee', '#555') + fl('M16 393h3v-3z', '#000'));
rule(436);
T.push(fl('M2 397h17v18H2z', '#b5d8f4') + box(6.500, 402.500, 9, 8, '#999', '#333') + ln('M7 404.500h8M8 410l6-4M8 406l4 4') + fl('M16 413h3v-3z', '#000'));
document.getElementById('tools').innerHTML = `<div class="toolbox"><svg width="23" height="417">${T.join('')}</svg></div>`;

/* rulers */
const step = 73.2;
const lbl = (x, y, t) => `<text x="${x}" y="${y}" font-size="7.800" letter-spacing="-.25" fill="#222">${t}</text>`;
let h = '<rect x="187" y="47" width="892" height="12" fill="#fff"/>', v = '<rect x="187" y="59" width="12" height="660" fill="#fff"/>';
for (let k = -9; k < 86; k++) {
  const x = Math.round(290 + k * step / 8) + .5, len = k % 8 === 0 ? 11 : k % 4 === 0 ? 4 : 2;
  if (x > 199) { h += ln(`M${x} ${58 - len}V58`, '#333'); if (k % 8 === 0) h += lbl(x + 1.500, 54.500, Math.abs(k * 9)); }
}
for (let k = 2; k < 76; k++) {
  const y = Math.round(33.600 + k * step / 8) + .5, len = k % 8 === 0 ? 12 : k % 4 === 0 ? 4 : 2;
  if (y > 60) { v += ln(`M${198 - len} ${y}H198`, '#333'); if (k % 8 === 0) v += [...String(k * 9)].map((c, j) => lbl(187.500, y + 8 + j * 5.700, c)).join(''); }
}
h += ln('M187 58.500H1079') + ln('M198.500 47v12') + ln('M851.500 48v10', '#999') + '<path d="M187 54.500h11M192.500 48v10" stroke="#333" stroke-dasharray="1 1"/>';
v += ln('M198.500 59v660');
document.getElementById('hruler').innerHTML = h;
document.getElementById('vruler').innerHTML = v;

/* spread: margins, column guides and page items */
const vl = (x, y, c, w) => ln(`M${x} ${y}V719`, c, w), hl = (a, b, y, c, w) => ln(`M${a} ${y}H${b}`, c, w);
let g = '';
for (let k = 0; k < 11; k++) for (const d of [0, 12.200]) g += vl(Math.round(368.400 + k * 43.600 + d) + .5, 137, '#a77bd8', 1.2);
for (const x of [943, 974, 986, 1018, 1030, 1061, 1073]) g += vl(x + .5, 137, x === 943 ? '#b465d0' : '#a878d0', 1.2);
g += vl(275.500, 59, '#dc8a90') + vl(290.500, 59, '#333') + vl(896, 59, '#777', 1.500);
g += [349.500, 835.500, 955.500].map(x => vl(x, 59, '#c2c2c2')).join('') + vl(848.500, 95, '#b9ddb6');
g += hl(337, 848, 95.500, '#aaa') + hl(943, 1079, 95.500, '#aaa') + hl(291, 1079, 129.500, '#b5b5b5');
g += hl(291, 1079, 242.500, '#4fd6e4') + hl(943, 1079, 136.500, '#cb6fd6');
g += hl(337, 848, 136.500, '#c94747', 1.300) + vl(337.500, 136, '#c05058', 1.300) + hl(337, 850, 716.500, '#e05048', 1.300);
g += [[337.500, 96], [943.500, 65]].map(([x, w]) => `<rect x="${x}" y="67.500" width="${w}" height="21" fill="none" stroke="#a9dca6" stroke-dasharray="1.500 1.500"/>`).join('');
g += '<text x="338" y="83" font-size="14.500" font-weight="700" fill="#cdbfb9">3<tspan dy="-1">8</tspan></text><text x="943" y="83" font-size="14.500" font-weight="700" fill="#cdc3bd">39</text>';
g += '<circle cx="836" cy="75" r="11.800" fill="#df4b34"/><path d="M829 80.500V74l5-6h8v12.500z" fill="#fff"/>' + ln('M835.500 60v27', '#b9a8a0') + ln('M835.500 73v4', '#765', 2);
g += ln('M591 424l4 4M595 424l-4 4', '#d55');
g += '<circle cx="850.500" cy="716.500" r="21" fill="#f4f04a" opacity=".6"/><circle cx="850.500" cy="715.500" r="4.500" fill="#fff" stroke="#e0762c" stroke-width="2.500"/>' + fl('M846 711h4l-3 4z', '#000') + ln('M848 713l5 5', '#222', 1);
document.getElementById('canvas').innerHTML = g;
```
